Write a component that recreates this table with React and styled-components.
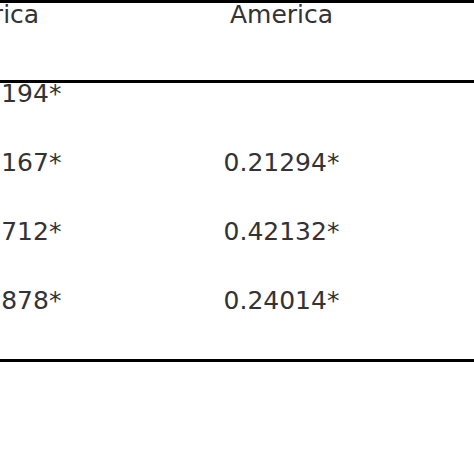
import React from 'react';
import styled, { createGlobalStyle } from 'styled-components';

const rows = [
	{ left: '0.31194*', right: '' },
	{ left: '0.28167*', right: '0.21294*' },
	{ left: '0.45712*', right: '0.42132*' },
	{ left: '0.22878*', right: '0.24014*' },
];

const App = () => {
	return (
		<>
			<GlobalStyle />
			<Table>
				<HeaderRow>
					<HeadCell>Africa</HeadCell>
					<HeadCell>America</HeadCell>
					<HeadCell />
				</HeaderRow>
				<Body>
					{rows.map((row, i) => (
						<Row key={i}>
							<Cell>{row.left}</Cell>
							<Cell>{row.right}</Cell>
							<Cell />
						</Row>
					))}
				</Body>
			</Table>
		</>
	);
};
export default App;

const GlobalStyle = createGlobalStyle`
	html, body {
		margin: 0;
		padding: 0;
		background: #ffffff;
		overflow: hidden;
		width: 474px;
		height: 474px;
	}
	body {
		font-family: "DejaVu Sans", "Liberation Sans", sans-serif;
		color: #333333;
	}
`;

const Table = styled.div`
	margin-left: -135.5px;
	width: calc(100% + 135.5px);
	border-top: 3px solid #000000;
	border-bottom: 3px solid #000000;
	font-size: 25px;
`;

const HeaderRow = styled.div`
	display: grid;
	grid-template-columns: 278px 278px 1fr;
	height: 77px;
	border-bottom: 3px solid #000000;
	line-height: 23px;
`;

const HeadCell = styled.div`
	text-align: center;
	white-space: nowrap;
`;

const Body = styled.div`
	display: flex;
	flex-direction: column;
`;

const Row = styled.div`
	display: grid;
	grid-template-columns: 278px 278px 1fr;
	height: 69px;
	line-height: 21px;
`;

const Cell = styled.div`
	text-align: center;
	white-space: nowrap;
`;
